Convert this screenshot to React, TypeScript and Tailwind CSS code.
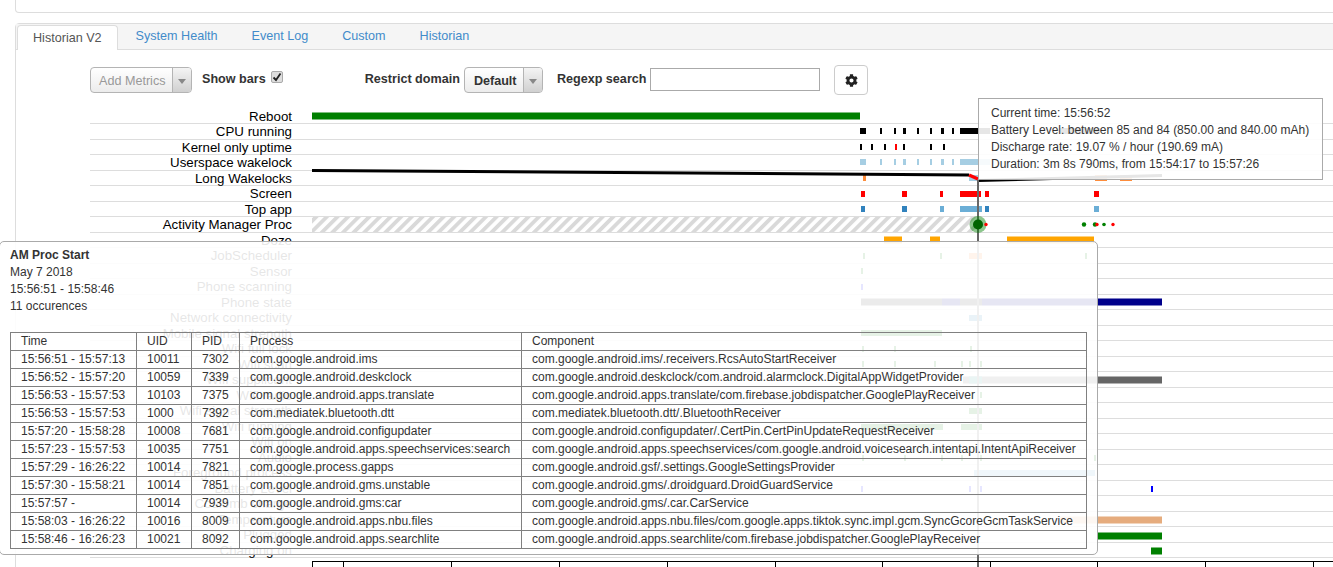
import React from 'react';
import { FaCog } from 'react-icons/fa';

const labels = [
  'Reboot', 'CPU running', 'Kernel only uptime', 'Userspace wakelock', 'Long Wakelocks', 'Screen', 'Top app',
  'Activity Manager Proc', 'Doze', 'JobScheduler', 'Sensor', 'Phone scanning', 'Phone state', 'Network connectivity',
  'Mobile signal strength', 'Wifi full lock', 'Wifi scan', 'Wifi supplicant', 'Wifi radio', 'Wifi signal strength',
  'Wifi running', 'Wifi on', 'Audio', 'Foreground process', 'Battery Level', 'Coulomb charge', 'Temperature',
  'Plugged', 'Charging on',
];

const occurrences = [
  ['15:56:51 - 15:57:13', '10011', '7302', 'com.google.android.ims', 'com.google.android.ims/.receivers.RcsAutoStartReceiver'],
  ['15:56:52 - 15:57:20', '10059', '7339', 'com.google.android.deskclock', 'com.google.android.deskclock/com.android.alarmclock.DigitalAppWidgetProvider'],
  ['15:56:53 - 15:57:53', '10103', '7375', 'com.google.android.apps.translate', 'com.google.android.apps.translate/com.firebase.jobdispatcher.GooglePlayReceiver'],
  ['15:56:53 - 15:57:53', '1000', '7392', 'com.mediatek.bluetooth.dtt', 'com.mediatek.bluetooth.dtt/.BluetoothReceiver'],
  ['15:57:20 - 15:58:28', '10008', '7681', 'com.google.android.configupdater', 'com.google.android.configupdater/.CertPin.CertPinUpdateRequestReceiver'],
  ['15:57:23 - 15:57:53', '10035', '7751', 'com.google.android.apps.speechservices:search', 'com.google.android.apps.speechservices/com.google.android.voicesearch.intentapi.IntentApiReceiver'],
  ['15:57:29 - 16:26:22', '10014', '7821', 'com.google.process.gapps', 'com.google.android.gsf/.settings.GoogleSettingsProvider'],
  ['15:57:30 - 15:58:21', '10014', '7851', 'com.google.android.gms.unstable', 'com.google.android.gms/.droidguard.DroidGuardService'],
  ['15:57:57 -', '10014', '7939', 'com.google.android.gms:car', 'com.google.android.gms/.car.CarService'],
  ['15:58:03 - 16:26:22', '10016', '8009', 'com.google.android.apps.nbu.files', 'com.google.android.apps.nbu.files/com.google.apps.tiktok.sync.impl.gcm.SyncGcoreGcmTaskService'],
  ['15:58:46 - 16:26:23', '10021', '8092', 'com.google.android.apps.searchlite', 'com.google.android.apps.searchlite/com.firebase.jobdispatcher.GooglePlayReceiver'],
];

// x, width, row centre, height, colour
type Bar = [number, number, number, number, string];

const ticks = (xs: number[], w: number, y: number, h: number, c: string): Bar[] => xs.map((x) => [x, w, y, h, c]);

const bars: Bar[] = [
  [312, 548, 116, 7, '#008000'],
  ...ticks([860], 6, 131, 6, '#000'),
  ...ticks([880, 894, 917, 930, 952], 2, 131, 6, '#000'),
  ...ticks([903, 941], 3, 131, 6, '#000'),
  [960, 30, 131, 6, '#000'],
  [1060, 40, 131, 6, '#000'],
  ...ticks([860, 871, 884, 903, 930, 943], 2, 147, 6, '#000'),
  [895, 2, 147, 6, '#f00'],
  ...ticks([860], 6, 162, 6, '#a6cee3'),
  ...ticks([880, 894, 917, 930, 952], 2, 162, 6, '#a6cee3'),
  ...ticks([903, 941], 3, 162, 6, '#a6cee3'),
  [960, 30, 162, 6, '#a6cee3'],
  [863, 3, 178, 6, '#fd8d3c'],
  [969, 9, 178, 6, '#a6cee3'],
  [1095, 12, 178, 6, '#fd8d3c'],
  [1120, 12, 178, 6, '#fd8d3c'],
  [861, 4, 194, 6, '#f00'],
  [902, 5, 194, 6, '#f00'],
  [940, 3, 194, 6, '#f00'],
  [960, 21, 194, 6, '#f00'],
  [985, 4, 194, 6, '#f00'],
  [1094, 5, 194, 6, '#f00'],
  [861, 4, 209, 6, '#3182bd'],
  [902, 5, 209, 6, '#3182bd'],
  [940, 4, 209, 6, '#6baed6'],
  [960, 22, 209, 6, '#6baed6'],
  [985, 4, 209, 6, '#3182bd'],
  [1094, 5, 209, 6, '#6baed6'],
  [884, 18, 240, 7, '#ffa500'],
  [930, 10, 240, 7, '#ffa500'],
  [1007, 87, 240, 7, '#ffa500'],
  ...ticks([863, 940, 1085], 2, 256, 6, '#008000'),
  [969, 13, 256, 6, '#fd8d3c'],
  [861, 2, 271, 6, '#008000'],
  [861, 2, 287, 6, '#0000ff'],
  [861, 81, 302, 7, '#333'],
  [942, 18, 302, 7, '#00008b'],
  [960, 22, 302, 7, '#333'],
  [982, 180, 302, 7, '#00008b'],
  [969, 13, 318, 6, '#3182bd'],
  [861, 81, 333, 6, '#008000'],
  ...ticks([862, 894, 970], 2, 349, 6, '#008000'),
  ...ticks([862, 894, 934, 961, 969, 980], 2, 364, 6, '#008000'),
  [963, 199, 380, 7, '#666'],
  [969, 13, 380, 7, '#2a9d8f'],
  [980, 2, 395, 6, '#008000'],
  [969, 13, 411, 6, '#008000'],
  [861, 82, 427, 6, '#008000'],
  [961, 21, 427, 6, '#008000'],
  ...ticks([862, 904, 941, 961, 980, 1094], 2, 458, 6, '#008000'),
  [974, 121, 473, 6, '#6baed6'],
  ...ticks([861, 969, 980], 2, 489, 6, '#0000ff'),
  [1151, 2, 489, 6, '#0000ff'],
  [1060, 102, 520, 7, '#e6ac7d'],
  [1097, 65, 536, 7, '#008000'],
  [1151, 11, 551, 7, '#008000'],
];

const axisTicks = [312, 343, 451, 559, 667, 775, 882, 990, 1097, 1205, 1313];

function Caret() {
  return (
    <span className="flex w-[19px] items-center justify-center border-l border-[#b4b4b4] bg-gradient-to-b from-[#f4f4f4] to-[#d0d0d0]">
      <span className="mt-[2px] border-x-[4px] border-t-[5px] border-x-transparent border-t-[#888]" />
    </span>
  );
}

function Chart() {
  return (
    <svg className="absolute left-0 top-0" width={1333} height={567}>
      <defs>
        <pattern id="hatch" width="7.5" height="7.5" patternUnits="userSpaceOnUse" patternTransform="rotate(45)">
          <rect width="7.5" height="7.5" fill="#fff" />
          <rect width="3.8" height="7.5" fill="#d9d9d9" />
        </pattern>
      </defs>
      <rect x={312} y={217} width={666} height={15} fill="url(#hatch)" />
      {bars.map(([x, w, y, h, c], i) => (
        <rect key={i} x={x} y={y - h / 2} width={w} height={h} fill={c} />
      ))}
      <path d="M312 170.5 L969 175" stroke="#000" strokeWidth={3} fill="none" />
      <path d="M969 175 L978 179" stroke="#f00" strokeWidth={3.5} fill="none" />
      <path d="M978 180.5 L1162 175.5" stroke="#000" strokeWidth={3} fill="none" />
      <path d="M978 180 V567" stroke="#666" strokeWidth={2} fill="none" />
      <circle cx={978} cy={224.5} r={8.5} fill="#008000" fillOpacity={0.45} />
      <circle cx={978} cy={224.5} r={5} fill="#006400" />
      <circle cx={986} cy={224.5} r={1.7} fill="#f00" />
      <circle cx={1084} cy={224.5} r={2.2} fill="#008000" />
      <circle cx={1095} cy={224.5} r={2.2} fill="#008000" />
      <circle cx={1097} cy={224.5} r={1.7} fill="#f00" />
      <circle cx={1104} cy={224.5} r={1.8} fill="#008000" />
      <circle cx={1113} cy={224.5} r={1.7} fill="#f00" />
      <path d="M312 561 H1333" stroke="#000" strokeWidth={1} fill="none" shapeRendering="crispEdges" />
      {axisTicks.map((x) => (
        <path key={x} d={`M${x} 561 V567`} stroke="#000" strokeWidth={1} fill="none" shapeRendering="crispEdges" />
      ))}
    </svg>
  );
}

export default function App() {
  return (
    <div className="relative h-[567px] w-[1333px] overflow-hidden bg-white font-['Liberation_Sans',Arial,sans-serif] text-[12.6px] text-[#333]">
      <div className="ml-[15px] h-[13px] w-[1330px] rounded-b-[4px] border border-t-0 border-[#ddd]" />

      <div className="ml-[15px] mt-[10px] h-[600px] w-[1330px] rounded-t-[4px] border border-[#ddd]">
        <div className="flex h-[26px] items-end border-b border-[#ddd] bg-[#f5f5f5] pl-px">
          <div className="-mb-px flex h-[25px] items-center rounded-t-[4px] border border-b-0 border-[#ddd] bg-white px-[15px] text-[#555]">
            Historian V2
          </div>
          {['System Health', 'Event Log', 'Custom', 'Historian'].map((tab) => (
            <div key={tab} className="ml-[2px] flex h-[25px] items-center px-4 text-[#428bca]">
              {tab}
            </div>
          ))}
        </div>

        <div className="ml-[74px] mt-[15px] flex h-[30px] items-start">
          <div className="mt-[2px] flex h-[26px] w-[102px] overflow-hidden rounded-[4px] border border-[#b4b4b4] bg-gradient-to-b from-white to-[#ececec]">
            <span className="flex-1 pl-2 leading-[26px] text-[#999]">Add Metrics</span>
            <Caret />
          </div>
          <span className="ml-[10px] mt-[5px] font-bold">Show bars</span>
          <span className="ml-[5px] mt-[6px] flex h-[12px] w-[12px] items-center justify-center rounded-[2px] border border-[#aaa] bg-[#ddd]">
            <svg width="10" height="10" viewBox="0 0 10 10">
              <path d="M1.5 5.5 L4 8 L8.5 1.5" stroke="#222" strokeWidth={1.8} fill="none" />
            </svg>
          </span>
          <span className="ml-[82px] mt-[5px] font-bold">Restrict domain</span>
          <div className="ml-[4px] mt-[2px] flex h-[26px] w-[79px] overflow-hidden rounded-[4px] border border-[#b4b4b4] bg-gradient-to-b from-white to-[#ececec]">
            <span className="flex-1 pl-[9px] font-bold leading-[26px]">Default</span>
            <Caret />
          </div>
          <span className="ml-[14px] mt-[5px] font-bold">Regexp search</span>
          <div className="ml-[4px] mt-[3px] h-[23px] w-[170px] border border-[#aaa]" />
          <div className="ml-[14px] flex h-[30px] w-[34px] items-center justify-center rounded-[4px] border border-[#ccc] bg-white text-[#222]">
            <FaCog size={13} />
          </div>
        </div>

        <div className="ml-[74px] mt-[13.5px]">
          {labels.map((label) => (
            <div key={label} className="flex h-[15.5px] items-center justify-end border-b border-[#ddd] pr-[1052px] pt-[2px] text-[13.3px] leading-[14px] text-black">
              {label}
            </div>
          ))}
        </div>
      </div>

      <Chart />

      <div className="absolute left-[978px] top-[98px] h-[82px] w-[345px] whitespace-nowrap border border-[#aaa] bg-white/90 px-3 py-[6px] text-[12px] leading-[17px] text-[#333]">
        <div>Current time: 15:56:52</div>
        <div>Battery Level: between 85 and 84 (850.00 and 840.00 mAh)</div>
        <div>Discharge rate: 19.07 % / hour (190.69 mA)</div>
        <div>Duration: 3m 8s 790ms, from 15:54:17 to 15:57:26</div>
      </div>

      <div className="absolute left-[-1px] top-[241px] h-[314px] w-[1099px] rounded-[5px] border border-[#aaa] bg-white/90 pl-[10px] pt-[5px] text-[12px] leading-[17px] text-[#333]">
        <div className="font-bold">AM Proc Start</div>
        <div>May 7 2018</div>
        <div>15:56:51 - 15:58:46</div>
        <div>11 occurences</div>
        <table className="mt-[17px] w-[1077px] table-fixed border-collapse border border-[#808080]">
          <colgroup>
            <col className="w-[126px]" />
            <col className="w-[55px]" />
            <col className="w-[48px]" />
            <col className="w-[282px]" />
            <col />
          </colgroup>
          <thead>
            <tr className="h-[18px]">
              {['Time', 'UID', 'PID', 'Process', 'Component'].map((h) => (
                <th key={h} className="border border-[#808080] px-[10px] py-0 text-left font-normal">
                  {h}
                </th>
              ))}
            </tr>
          </thead>
          <tbody>
            {occurrences.map((row) => (
              <tr key={row[2]} className="h-[18px]">
                {row.map((cell, i) => (
                  <td key={i} className="whitespace-nowrap border border-[#808080] px-[10px] py-0">
                    {cell}
                  </td>
                ))}
              </tr>
            ))}
          </tbody>
        </table>
      </div>
    </div>
  );
}
